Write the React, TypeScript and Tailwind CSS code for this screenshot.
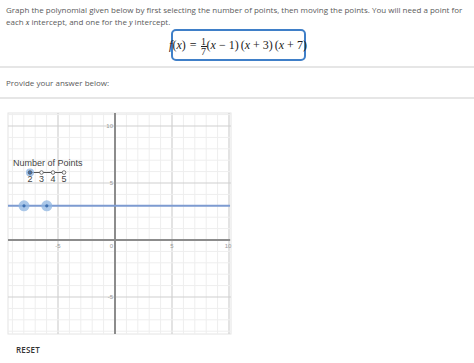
import React from 'react'

const S = 11.4
const OX = 107
const OY = 127
const W = 223
const H = 221

function Graph() {
  const xs: number[] = []
  for (let k = -9; k <= 10; k++) xs.push(k)
  const ys: number[] = []
  for (let k = -8; k <= 11; k++) ys.push(k)
  const px = (k: number) => OX + S * k
  const py = (k: number) => OY - S * k
  return (
    <svg width={W + 2} height={H + 2} viewBox={`-1 -1 ${W + 2} ${H + 2}`} className="block">
      <rect x={0} y={0} width={W} height={H} fill="#fff" stroke="#e4e4e4" strokeWidth={1} />
      {/* grid */}
      {xs.map((k) => (
        <line key={'vx' + k} x1={px(k)} y1={0} x2={px(k)} y2={H} stroke={k % 5 === 0 ? '#d0d0d0' : '#eeeeee'} strokeWidth={k % 5 === 0 ? 1.2 : 1} />
      ))}
      {ys.map((k) => (
        <line key={'hy' + k} x1={0} y1={py(k)} x2={W} y2={py(k)} stroke={k % 5 === 0 ? '#d0d0d0' : '#eeeeee'} strokeWidth={k % 5 === 0 ? 1.2 : 1} />
      ))}
      {/* axes */}
      <line x1={0} y1={OY} x2={W - 1} y2={OY} stroke="#8c8c8c" strokeWidth={2} />
      <line x1={OX} y1={0} x2={OX} y2={H} stroke="#8c8c8c" strokeWidth={2} />
      {/* labels */}
      <g fontFamily="Liberation Sans, Arial, sans-serif" fontSize={6} fill="#9a9a9a">
        <text x={OX - 2} y={py(10) + 2} textAnchor="end">10</text>
        <text x={OX - 2} y={py(5) + 2} textAnchor="end">5</text>
        <text x={OX - 2} y={py(-5) + 2} textAnchor="end">-5</text>
        <text x={px(-5)} y={OY + 8} textAnchor="middle">-5</text>
        <text x={OX - 2} y={OY + 8} textAnchor="end">0</text>
        <text x={px(5)} y={OY + 8} textAnchor="middle">5</text>
        <text x={px(10) - 1} y={OY + 8} textAnchor="middle">10</text>
      </g>
      {/* blue line */}
      <line x1={0} y1={py(3)} x2={W - 1} y2={py(3)} stroke="#7d9bd1" strokeWidth={2} />
      {[-8, -6].map((k) => (
        <g key={'p' + k}>
          <circle cx={px(k) + 0.2} cy={py(3)} r={5.5} fill="#8fb5e2" opacity={0.75} />
          <circle cx={px(k) + 0.2} cy={py(3)} r={1.6} fill="#3d6fb0" />
        </g>
      ))}
      {/* number of points widget */}
      <text x={5} y={53} fontFamily="Liberation Sans, Arial, sans-serif" fontSize={9} fill="#444">Number of Points</text>
      <line x1={22} y1={59.5} x2={56} y2={59.5} stroke="#555" strokeWidth={1} />
      <circle cx={22} cy={59.5} r={4} fill="#8fb5e2" opacity={0.8} />
      {[22, 33.5, 45, 56].map((x, i) => (
        <g key={'s' + i}>
          <circle cx={x} cy={59.5} r={1.8} fill={i === 0 ? '#3d6fb0' : '#fff'} stroke="#555" strokeWidth={0.8} />
          <text x={x} y={69} textAnchor="middle" fontFamily="Liberation Sans, Arial, sans-serif" fontSize={9} fill="#444">{i + 2}</text>
        </g>
      ))}
    </svg>
  )
}

function Formula() {
  const v = 'italic'
  return (
    <div
      className="flex items-center justify-center whitespace-nowrap border-2 border-[#3f7fc8] rounded-[5px] w-[135px] h-[32px] text-[12px] text-[#222] leading-none"
      style={{ fontFamily: '"Liberation Serif", "DejaVu Serif", serif' }}
    >
      <span className={v}>f</span>
      <span>(</span>
      <span className={v}>x</span>
      <span>)</span>
      <span className="mx-[4px]">=</span>
      <span className="inline-flex flex-col items-center text-[10px] leading-[9px] mt-[2px]">
        <span>1</span>
        <span className="w-[6px] border-t border-[#222]" />
        <span>7</span>
      </span>
      <span>(</span>
      <span className={v}>x</span>
      <span className="mx-[3px]">−</span>
      <span>1)</span>
      <span className="ml-[2px]">(</span>
      <span className={v}>x</span>
      <span className="mx-[3px]">+</span>
      <span>3)</span>
      <span className="ml-[2px]">(</span>
      <span className={v}>x</span>
      <span className="mx-[3px]">+</span>
      <span>7)</span>
    </div>
  )
}

export default function App() {
  return (
    <div
      className="w-[474px] h-[363px] bg-white text-[#5a5a5a] overflow-hidden"
      style={{ fontFamily: '"Open Sans", "Liberation Sans", sans-serif' }}
    >
      <div className="px-[6px] pt-[4px] text-[8px] leading-[12px]">
        Graph the polynomial given below by first selecting the number of points, then moving the points. You will need a point for
        each <span className="italic leading-none text-[#333]" style={{ fontFamily: '"Liberation Serif", serif' }}>x</span> intercept, and one for the{' '}
        <span className="italic leading-none text-[#333]" style={{ fontFamily: '"Liberation Serif", serif' }}>y</span> intercept.
      </div>
      <div className="flex justify-center pl-[2px] mt-[1px]">
        <Formula />
      </div>
      <div className="mt-[5px] h-[2px] bg-[#e6e6e6]" />
      <div className="px-[6px] pt-[10px] pb-[9px] text-[8px] leading-[10px]">Provide your answer below:</div>
      <div className="h-[2px] bg-[#e6e6e6]" />
      <div className="pl-[7px] pt-[13px]">
        <Graph />
      </div>
      <div className="pl-[16px] pt-[9px] text-[8px] font-semibold text-[#333] tracking-[0.2px]">RESET</div>
    </div>
  )
}
